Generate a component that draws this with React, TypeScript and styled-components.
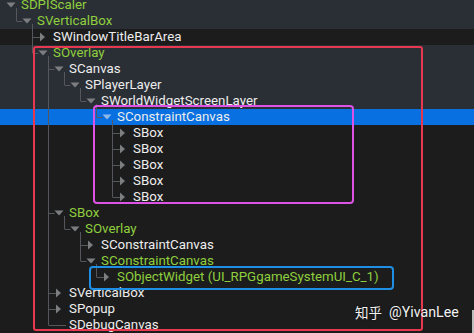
import React from "react";
import styled, { createGlobalStyle } from "styled-components";

const Global = createGlobalStyle`
  html, body { margin: 0; padding: 0; background: #1c1c1c; overflow: hidden; }
  #root { width: 474px; height: 333px; }
`;

type Tone = "gray" | "dark" | "sel";
type Arrow = "down" | "right" | undefined;

interface Node {
  t: string;
  l: number;
  a?: Arrow;
  g?: boolean;
  tone: Tone;
}

const rows: Node[] = [
  { t: "SDPIScaler", l: 0, a: "down", g: true, tone: "gray" },
  { t: "SVerticalBox", l: 1, a: "down", g: true, tone: "gray" },
  { t: "SWindowTitleBarArea", l: 2, a: "right", tone: "dark" },
  { t: "SOverlay", l: 2, a: "down", g: true, tone: "gray" },
  { t: "SCanvas", l: 3, a: "down", tone: "gray" },
  { t: "SPlayerLayer", l: 4, a: "down", tone: "gray" },
  { t: "SWorldWidgetScreenLayer", l: 5, a: "down", tone: "gray" },
  { t: "SConstraintCanvas", l: 6, a: "down", tone: "sel" },
  { t: "SBox", l: 7, a: "right", tone: "dark" },
  { t: "SBox", l: 7, a: "right", tone: "dark" },
  { t: "SBox", l: 7, a: "right", tone: "dark" },
  { t: "SBox", l: 7, a: "right", tone: "dark" },
  { t: "SBox", l: 7, a: "right", tone: "dark" },
  { t: "SBox", l: 3, a: "down", g: true, tone: "dark" },
  { t: "SOverlay", l: 4, a: "down", g: true, tone: "dark" },
  { t: "SConstraintCanvas", l: 5, a: "right", tone: "dark" },
  { t: "SConstraintCanvas", l: 5, a: "down", g: true, tone: "dark" },
  { t: "SObjectWidget (UI_RPGgameSystemUI_C_1)", l: 6, a: "right", g: true, tone: "dark" },
  { t: "SVerticalBox", l: 3, a: "right", tone: "dark" },
  { t: "SPopup", l: 3, a: "right", tone: "dark" },
  { t: "SDebugCanvas", l: 3, tone: "dark" },
];

const ROW = 16;
const textX = (l: number) => 21 + 16 * l;
const lineX = (l: number) => textX(l) - 4.5;

const hasNext = (i: number) => {
  const L = rows[i].l;
  for (let j = i + 1; j < rows.length; j++) {
    if (rows[j].l < L) return false;
    if (rows[j].l === L) return true;
  }
  return false;
};

const ancestorAt = (i: number, depth: number) => {
  for (let j = i; j >= 0; j--) {
    if (rows[j].l === depth) return j;
  }
  return -1;
};

const Frame = styled.div`
  position: relative;
  width: 474px;
  height: 333px;
  overflow: hidden;
  background: #1c1c1c;
  font-family: Roboto, "Noto Sans", "Liberation Sans", sans-serif;
`;

const Tree = styled.div`
  display: flex;
  flex-direction: column;
  margin-top: -3px;
`;

const toneBg: Record<Tone, string> = {
  gray: "#2a2e35",
  dark: "#1c1c1c",
  sel: "#0870e0",
};

const Row = styled.div<{ $tone: Tone }>`
  display: flex;
  align-items: center;
  height: ${ROW}px;
  background: ${(p) => toneBg[p.$tone]};
`;

const Label = styled.span<{ $green?: boolean }>`
  font-size: 13.3px;
  line-height: ${ROW}px;
  white-space: nowrap;
  color: ${(p) => (p.$green ? "#8fcf3e" : "#ededed")};
`;

const Gutter = styled.svg`
  flex: none;
  display: block;
`;

const Annot = styled.div<{ $c: string; $x: number; $y: number; $w: number; $h: number; $r?: number }>`
  position: absolute;
  left: ${(p) => p.$x}px;
  top: ${(p) => p.$y}px;
  width: ${(p) => p.$w}px;
  height: ${(p) => p.$h}px;
  box-sizing: border-box;
  border: 2px solid ${(p) => p.$c};
  border-radius: ${(p) => p.$r ?? 3}px;
  pointer-events: none;
`;

const Watermark = styled.div`
  position: absolute;
  left: 355px;
  top: 302px;
  display: flex;
  align-items: center;
  gap: 7px;
  font-family: Roboto, "Noto Sans CJK SC", sans-serif;
  font-size: 14.2px;
  color: #f2f2f2;
  white-space: nowrap;
  text-shadow: 0 0 2px rgba(0, 0, 0, 0.6);
`;

const Cjk = styled.span`
  font-family: "Noto Sans CJK SC", sans-serif;
  font-size: 13.5px;
`;

const Thumb = styled.div`
  position: absolute;
  right: 0;
  top: 310px;
  width: 2px;
  height: 23px;
  background: #bdbdbd;
`;

const WIRE = "#54575b";

function Wires({ i }: { i: number }) {
  const n = rows[i];
  const L = n.l;
  const w = textX(L);
  const c = ROW / 2;
  const parts: React.ReactNode[] = [];
  for (let d = 1; d < L; d++) {
    const a = ancestorAt(i, d);
    if (a >= 0 && hasNext(a)) {
      const x = lineX(d - 1);
      parts.push(<line key={"v" + d} x1={x} y1={0} x2={x} y2={ROW} stroke={WIRE} strokeWidth={1} />);
    }
  }
  if (L >= 1) {
    const x = lineX(L - 1);
    parts.push(
      <line key="own" x1={x} y1={0} x2={x} y2={hasNext(i) ? ROW : c} stroke={WIRE} strokeWidth={1} />
    );
    const end = n.a === "down" ? w - 14.5 : n.a === "right" ? w - 13 : w - 3;
    parts.push(<line key="stub" x1={x} y1={c + 0.5} x2={end} y2={c + 0.5} stroke={WIRE} strokeWidth={1} />);
  }
  if (n.a === "down" && rows[i + 1] && rows[i + 1].l === L + 1) {
    const x = lineX(L);
    parts.push(<line key="kid" x1={x} y1={c + 3} x2={x} y2={ROW} stroke={WIRE} strokeWidth={1} />);
  }
  const fill = n.tone === "sel" ? "#8fb8e8" : "#7d7e80";
  if (n.a === "down") {
    const cx = w - 10;
    parts.push(
      <polygon key="arr" points={`${cx - 4.5},${c - 2.5} ${cx + 4.5},${c - 2.5} ${cx},${c + 2.5}`} fill={fill} />
    );
  } else if (n.a === "right") {
    parts.push(
      <polygon key="arr" points={`${w - 13},${c - 4.5} ${w - 13},${c + 4.5} ${w - 8},${c}`} fill={fill} />
    );
  }
  return (
    <Gutter width={w} height={ROW} viewBox={`0 0 ${w} ${ROW}`}>
      {parts}
    </Gutter>
  );
}

export default function App() {
  return (
    <>
      <Global />
      <Frame>
        <Tree>
          {rows.map((n, i) => (
            <Row key={i} $tone={n.tone}>
              <Wires i={i} />
              <Label $green={n.g}>{n.t}</Label>
            </Row>
          ))}
        </Tree>
        <Annot $c="#e8384f" $x={33} $y={46} $w={390} $h={285} $r={3} />
        <Annot $c="#de52e6" $x={93} $y={105} $w={261} $h={99} $r={4} />
        <Annot $c="#1f8fe6" $x={89} $y={266} $w={305} $h={24} $r={4} />
        <Watermark>
          <Cjk>知乎</Cjk>
          <span>@YivanLee</span>
        </Watermark>
        <Thumb />
      </Frame>
    </>
  );
}
